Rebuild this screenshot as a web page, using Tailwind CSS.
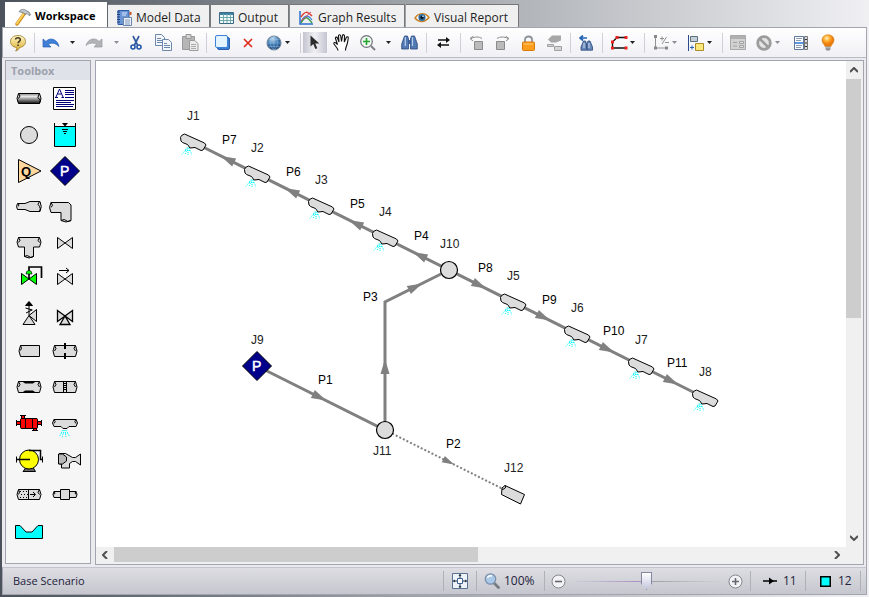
<!DOCTYPE html>
<html lang="en">
<head>
    <meta charset="UTF-8">
    <meta name="viewport" content="width=device-width, initial-scale=1.0">
    <title>Workspace - Base Scenario</title>
    <script src="https://cdn.jsdelivr.net/npm/@tailwindcss/browser@4"></script>
</head>
<body class="h-screen overflow-hidden flex flex-col pl-0.5 pr-0.5 pb-0.5 bg-linear-to-r from-[#4b525b] via-[#9ba0a5] via-45% to-[#f0f0f3] font-['Open_Sans',sans-serif] text-xs text-[#1e1e1e]">

    <!-- Tabs -->
    <nav class="flex items-end h-[27px] shrink-0 pl-[3px] gap-px" role="tablist">
        <button role="tab" aria-selected="true" class="flex items-center gap-1 h-[25px] w-[102px] pl-2.5 pt-1 bg-white font-bold text-[11px] text-black whitespace-nowrap">
            <svg width="16" height="18" viewBox="0 0 16 18" class="shrink-0"><path d="M2 16 9 6" stroke="#c98a1c" stroke-width="3.400" stroke-linecap="round"/><path d="M2 15.500 8.500 6" stroke="#ffd257" stroke-width="2" stroke-linecap="round"/><path d="M4 3.500C6 1 9 .8 11 2.500l3 1.500 1.500 3-1.500.5-2-2-2 .8L8 4.500 5 4z" fill="#c3c8cd" stroke="#5d6268" stroke-width=".7"/></svg>
            Workspace
        </button>
        <button role="tab" class="flex items-center gap-1 h-[23px] w-[102px] pl-2 pt-1 bg-[#f0f0f0] border-t border-r border-[#77777a] whitespace-nowrap">
            <svg width="16" height="16" viewBox="0 0 16 16" class="shrink-0"><path d="M2 .5h11v14H2z" fill="#6a96d8" stroke="#2f5da8"/><path d="M1 2h3M1 4.500h3M1 7h3M1 9.500h3M1 12h3" stroke="#1f3f7a"/><path d="M6 3h5M6 5h4" stroke="#dbe8fa"/><path d="M7.500 7.500h8v8h-8z" fill="#eef3fb" stroke="#6883ad"/><path d="M9 10h5M9 12h5M9 14h5" stroke="#7f97bd"/><path d="M14.500 2v3" stroke="#c9552d" stroke-width="2"/></svg>
            Model Data
        </button>
        <button role="tab" class="flex items-center gap-1 h-[23px] w-[78px] pl-2 pt-1 bg-[#f0f0f0] border-t border-r border-[#77777a] whitespace-nowrap">
            <svg width="15" height="14" viewBox="0 0 15 14" class="shrink-0"><path d="M.5 1.500h14v11H.5z" fill="#f4fafb" stroke="#3a6b82"/><path d="M1 3h13" stroke="#3d82a5" stroke-width="2"/><path d="M1 6.500h13M1 9.500h13M4.500 3v9M8 3v9M11.500 3v9" stroke="#6fa9ab"/></svg>
            Output
        </button>
        <button role="tab" class="flex items-center gap-1 h-[23px] w-[115px] pl-2 pt-1 bg-[#f0f0f0] border-t border-r border-[#77777a] whitespace-nowrap">
            <svg width="16" height="16" viewBox="0 0 16 16" class="shrink-0" fill="none"><path d="M2 1v13h13" stroke="#2a6fd0" stroke-width="1.500"/><path d="M3 7c4-6 6-6 11-1" stroke="#e0412f" stroke-width="1.500"/><path d="M3 12c3-7 7-8 11-2" stroke="#3b7fe0" stroke-width="1.300"/><path d="M3 13C7 6 9 6 14 13" stroke="#3c9c4d" stroke-width="1.500"/><path d="M13 2 3 11" stroke="#d4476b"/></svg>
            Graph Results
        </button>
        <button role="tab" class="flex items-center gap-1 h-[23px] w-[113px] pl-2 pt-1 bg-[#f0f0f0] border-t border-r border-[#77777a] whitespace-nowrap">
            <svg width="16" height="14" viewBox="0 0 16 14" class="shrink-0"><path d="M1 7c3.500-5 10-6 14-.5C11 11.500 5 12 1 7z" fill="#fff" stroke="#c98428" stroke-width="1.500"/><circle cx="8" cy="6.500" r="3.600" fill="#2e6a9c"/><circle cx="8" cy="6.500" r="1.700" fill="#0c1c2c"/><circle cx="9" cy="5.300" r=".8" fill="#fff"/></svg>
            Visual Report
        </button>
    </nav>

    <!-- Toolbar -->
    <div role="toolbar" class="flex items-stretch h-[31px] shrink-0 border border-[#a2a4b0] border-b-[#b9bac6] pl-0.5 bg-linear-to-b from-white to-[#f0f0f5]">
        <button aria-label="Help" class="w-[26px] grid place-items-center shrink-0">
            <svg width="18" height="18" viewBox="0 0 18 18"><defs><linearGradient id="gold" x2="0" y2="1"><stop stop-color="#fff8c8"/><stop offset="1" stop-color="#d9ab28"/></linearGradient></defs><path d="M9 1.500c4.500 0 7.500 2.500 7.500 6s-2.500 5.500-6 6c-.5 2-2 3-4 3.500 1-1 1.300-2 1-3.500-3.500-.5-6-2.500-6-6s3-6 7.500-6z" fill="url(#gold)" stroke="#9a7a2c" stroke-width=".8"/><path d="M6.500 5.500C6.800 3 11.500 3 11.300 6c0 1.500-2.200 1.500-2.200 3.200M9.100 10.600v1.500" fill="none" stroke="#4a3a20" stroke-width="1.600"/></svg>
        </button>
        <span class="w-1.5 grid place-items-center shrink-0"><i class="w-px h-5 bg-[#cfcfd8]"></i></span>
        <button aria-label="Undo" class="w-7 grid place-items-center shrink-0">
            <svg width="18" height="14" viewBox="0 0 18 14"><path d="M1 3v8h8L6.500 8.500C9 6.500 13 6.500 17 10.500 15.500 3.500 8.500.5 4 5.500z" fill="#3f7fd8" stroke="#2c62b4" stroke-width=".7"/></svg>
        </button>
        <button aria-label="Undo list" class="w-3.5 grid place-items-center shrink-0"><svg width="5" height="3"><path d="M0 0h5L2.500 3z" fill="#222"/></svg></button>
        <button aria-label="Redo" class="w-[30px] grid place-items-center shrink-0">
            <svg width="18" height="14" viewBox="0 0 18 14"><path d="M17 3v8H9l2.500-2.500C9 6.500 5 6.500 1 9.500 2.500 3.500 9.500.5 14 5.500z" fill="#b2b3b6" stroke="#97989c" stroke-width=".7"/></svg>
        </button>
        <button aria-label="Redo list" class="w-3.5 grid place-items-center shrink-0"><svg width="5" height="3"><path d="M0 0h5L2.500 3z" fill="#8e8e96"/></svg></button>
        <button aria-label="Cut" class="w-[26px] grid place-items-center shrink-0">
            <svg width="12" height="16" viewBox="0 0 12 16" fill="none"><path d="m3 1 4.500 9M9 1 4.500 10" stroke="#345da0" stroke-width="1.700"/><circle cx="3" cy="12" r="2" stroke="#2356a8" stroke-width="1.600"/><circle cx="9" cy="12" r="2" stroke="#2356a8" stroke-width="1.600"/></svg>
        </button>
        <button aria-label="Copy" class="w-7 grid place-items-center shrink-0">
            <svg width="17" height="17" viewBox="0 0 17 17" fill="#f3f6fb" stroke="#6e87ad"><path d="M.5.500h6l3 3v8h-9z"/><path d="M2 4.500h4M2 6.500h5M2 8.500h5"/><path d="M7.500 5.500h6l3 3v8h-9z"/><path d="M9 9.500h3M9 11.500h6M9 13.500h6"/></svg>
        </button>
        <button aria-label="Paste" class="w-[26px] grid place-items-center shrink-0">
            <svg width="17" height="17" viewBox="0 0 17 17"><path d="M.5 2.500h12v13H.5z" fill="#b6b6b6" stroke="#999"/><path d="M4 .5h5v4H4z" fill="#d5d5d5" stroke="#999"/><path d="M7.500 6.500h5l3.500 3v7H7.500z" fill="#ececec" stroke="#9a9a9a"/><path d="M9 10.500h5M9 12.500h5M9 14.500h5" stroke="#aaa"/></svg>
        </button>
        <span class="w-1.5 grid place-items-center shrink-0"><i class="w-px h-5 bg-[#cfcfd8]"></i></span>
        <button aria-label="Duplicate" class="w-[26px] grid place-items-center shrink-0">
            <svg width="15" height="15" viewBox="0 0 15 15"><rect x="2.500" y="2.500" width="12" height="12" rx="1.500" fill="#3d7fd2" stroke="#2a5fae"/><rect x=".5" y=".5" width="12" height="12" rx="1.500" fill="#e4f4ff" stroke="#3b82d8"/></svg>
        </button>
        <button aria-label="Delete" class="w-[26px] grid place-items-center shrink-0">
            <svg width="10" height="10" viewBox="0 0 10 10"><path d="m1 1 8 8M9 1 1 9" stroke="#e02a1a" stroke-width="1.700"/></svg>
        </button>
        <button aria-label="Globe" class="w-9 flex items-center gap-[3px] pl-[5px] shrink-0">
            <svg width="16" height="16" viewBox="0 0 16 16"><defs><radialGradient id="globe" cx=".4" cy=".2" r=".8"><stop stop-color="#c4dcee"/><stop offset=".5" stop-color="#427db5"/><stop offset="1" stop-color="#1d4478"/></radialGradient></defs><circle cx="8" cy="8" r="7" fill="url(#globe)" stroke="#6c8197"/><path d="M1.500 8h13M3 4.500h10M3 11.500h10M8 1v14M8 1C3 5 3 11 8 15M8 1c5 4 5 10 0 14" fill="none" stroke="#a5cbe8" stroke-width=".4"/></svg>
            <svg width="5" height="3"><path d="M0 0h5L2.500 3z" fill="#222"/></svg>
        </button>
        <span class="w-1.5 grid place-items-center shrink-0"><i class="w-px h-5 bg-[#cfcfd8]"></i></span>
        <button aria-label="Select" aria-pressed="true" class="w-6 my-1 grid place-items-center shrink-0 bg-linear-to-r from-[#c4c5d0] via-[#efeff4] to-[#c4c5d0]">
            <svg width="10" height="15" viewBox="0 0 10 15"><path d="M.5.5v11l2.800-2.500 2 5 2-.8-2-4.700h4z" fill="#2b2b2b"/></svg>
        </button>
        <button aria-label="Pan" class="w-7 grid place-items-center shrink-0">
            <svg width="17" height="17" viewBox="0 0 17 17"><path d="M5 16.500c0-2-2.500-4-4-6.500-.5-1.500 1-2 2-1l1.500 1.500L2.500 4.500c-.3-1.500 1.500-2 2-.5L6 8 5.500 2c0-1.600 2-1.600 2.200 0L8.500 7.500 9.500 1.700c.3-1.500 2-1.300 2 .3L11.300 8l2-4.500c.6-1.300 2.200-.7 2 .7-.6 3-.6 5-1.800 7.800-.5 1.500-1 2-1 4.500" fill="#fff" stroke="#111" stroke-width="1.100"/></svg>
        </button>
        <button aria-label="Zoom" class="w-[26px] grid place-items-center shrink-0">
            <svg width="16" height="16" viewBox="0 0 16 16"><path d="m11 11 4 4" stroke="#7b8088" stroke-width="2"/><circle cx="6.500" cy="6.500" r="5.800" fill="#f2f8f2" stroke="#70767c" stroke-width="1.200"/><path d="M3 6.500h7M6.500 3v7" stroke="#24a52c" stroke-width="1.600"/></svg>
        </button>
        <button aria-label="Zoom list" class="w-3.5 grid place-items-center shrink-0"><svg width="5" height="3"><path d="M0 0h5L2.500 3z" fill="#222"/></svg></button>
        <button aria-label="Find" class="w-7 grid place-items-center shrink-0">
            <svg width="17" height="15" viewBox="0 0 17 15"><path d="M3.500 1h3l1 3v10H.7V9zM13.500 1h-3l-1 3v10h6.800V9z" fill="#5179b4" stroke="#28477c" stroke-width=".8"/><path d="M7 5h3v4H7z" fill="#3c5f99"/><path d="M4.300 2v9M11.500 2v9" stroke="#b8cdea" stroke-width="1.200"/></svg>
        </button>
        <span class="w-1.5 grid place-items-center shrink-0"><i class="w-px h-5 bg-[#cfcfd8]"></i></span>
        <button aria-label="Reverse direction" class="w-7 grid place-items-center shrink-0">
            <svg width="13" height="11" viewBox="0 0 13 11"><path d="M1 3h10M2 8h10" stroke="#111" stroke-width="1.300"/><path d="M9 0v6l4-3zM4 5v6L0 8z" fill="#111"/></svg>
        </button>
        <span class="w-1.5 grid place-items-center shrink-0"><i class="w-px h-5 bg-[#cfcfd8]"></i></span>
        <button aria-label="Rotate left" class="w-[26px] grid place-items-center shrink-0">
            <svg width="15" height="14" viewBox="0 0 15 14"><path d="M5.500 5.500h8v8h-8z" fill="#bbb" stroke="#8b8b8b"/><path d="M13 2.500C10 .5 6 .5 2 2.500M4.500 0 1 2.500 4 5" fill="none" stroke="#8b8b8b"/></svg>
        </button>
        <button aria-label="Rotate right" class="w-[26px] grid place-items-center shrink-0">
            <svg width="15" height="14" viewBox="0 0 15 14"><path d="M1.500 5.500h8v8h-8z" fill="#bbb" stroke="#8b8b8b"/><path d="M2 2.500C5 .5 9 .5 13 2.500M10.500 0 14 2.500 11 5" fill="none" stroke="#8b8b8b"/></svg>
        </button>
        <button aria-label="Lock" class="w-[26px] grid place-items-center shrink-0">
            <svg width="13" height="16" viewBox="0 0 13 16"><path d="M3 7.500V4.500C3 .5 10 .5 10 4.500v3" fill="none" stroke="#8d9199" stroke-width="1.800"/><rect x=".5" y="7" width="12" height="8.500" rx="1" fill="#ff9d1c" stroke="#d87806"/><path d="M1.500 9h10" stroke="#ffd07d"/></svg>
        </button>
        <button aria-label="Arrange" class="w-[26px] grid place-items-center shrink-0">
            <svg width="16" height="16" viewBox="0 0 16 16"><path d="M2 4.500 6 .5h9v5l-5 2H5z" fill="#a6a6a6"/><path d="M1.500 9.500h6v2h-6zM8.500 11.500h7v4h-7z" fill="#d4d4d4" stroke="#a0a0a0"/></svg>
        </button>
        <span class="w-1.5 grid place-items-center shrink-0"><i class="w-px h-5 bg-[#cfcfd8]"></i></span>
        <button aria-label="Find previous" class="w-[26px] grid place-items-center shrink-0">
            <svg width="14" height="16" viewBox="0 0 14 16"><path d="M8 3H2M4 .500 1 3l3 2.500" fill="none" stroke="#2463b8" stroke-width="1.700"/><path d="M4.500 6h2l1 2.500v6.700H2V12zM11 6H9L8 8.500v6.700h5.500V12z" fill="#6788b8" stroke="#28477c" stroke-width=".8"/><path d="M5 8v5M10 8v5" stroke="#d0def2"/></svg>
        </button>
        <span class="w-1.5 grid place-items-center shrink-0"><i class="w-px h-5 bg-[#cfcfd8]"></i></span>
        <button aria-label="Pipe segments" class="w-9 flex items-center gap-0.5 pl-1.5 shrink-0">
            <svg width="17" height="14" viewBox="0 0 17 14"><path d="M15 1.500H6L1.500 6v6H15" fill="none" stroke="#111" stroke-width="1.300"/><path d="M4.500 0h3v3h-3zM13.500 0h3v3h-3zM0 4.500h3v3H0zM0 10.500h3v3H0zM13.500 10.500h3v3h-3z" fill="#e8221c"/></svg>
            <svg width="5" height="3"><path d="M0 0h5L2.500 3z" fill="#222"/></svg>
        </button>
        <span class="w-1.5 grid place-items-center shrink-0"><i class="w-px h-5 bg-[#cfcfd8]"></i></span>
        <button aria-label="Scale" class="w-9 flex items-center gap-[3px] pl-1.5 shrink-0">
            <svg width="16" height="15" viewBox="0 0 16 15"><path d="M2.500 2v11H14M7 3.500h4M9 1.500v4M9 9l4.500-7M12 7.500h4" fill="none" stroke="#929292"/><path d="M1 0h3v3H1zM1 11.500h3v3H1zM12 11.500h3v3h-3z" fill="#888"/></svg>
            <svg width="5" height="3"><path d="M0 0h5L2.500 3z" fill="#8e8e96"/></svg>
        </button>
        <button aria-label="Align" class="w-9 flex items-center gap-[3px] pl-[5px] shrink-0">
            <svg width="16" height="16" viewBox="0 0 16 16"><path d="M.5 0v16" stroke="#2b4a8a"/><path d="M2.500 1.500h7v5h-7z" fill="#c3d0d8" stroke="#5e6f7c"/><path d="M7.500 8.500h8v7h-8z" fill="#fbe77a" stroke="#a88d2a"/><path d="M2 12.500h4M4 10.500v4" stroke="#2463b8"/></svg>
            <svg width="5" height="3"><path d="M0 0h5L2.500 3z" fill="#222"/></svg>
        </button>
        <span class="w-1.5 grid place-items-center shrink-0"><i class="w-px h-5 bg-[#cfcfd8]"></i></span>
        <button aria-label="Properties" class="w-[26px] grid place-items-center shrink-0">
            <svg width="16" height="15" viewBox="0 0 16 15"><path d="M.5.500h15v14H.5z" fill="#d2d2d2" stroke="#a8a8a8"/><path d="M1 2.500h14" stroke="#b0b0b0" stroke-width="3"/><path d="M3 7.500h4M3 11h4M9.500 6.500h4v2h-4zM9.500 10.500h4v2h-4z" fill="#e6e6e6" stroke="#a0a0a0"/></svg>
        </button>
        <button aria-label="Disable" class="w-9 flex items-center gap-[3px] pl-[5px] shrink-0">
            <svg width="16" height="16" viewBox="0 0 16 16"><circle cx="8" cy="8" r="6.300" fill="#e4e4e4" stroke="#9c9c9c" stroke-width="2.800"/><path d="m3.500 3.500 9 9" stroke="#9c9c9c" stroke-width="2.600"/></svg>
            <svg width="5" height="3"><path d="M0 0h5L2.500 3z" fill="#8e8e96"/></svg>
        </button>
        <button aria-label="List" class="w-7 grid place-items-center shrink-0">
            <svg width="14" height="14" viewBox="0 0 14 14"><path d="M.5.500h9v13h-9z" fill="#fff" stroke="#5d7699"/><path d="M10.500.500h3v13h-3z" fill="#ddd" stroke="#777"/><path d="M2 2.500h6M2 4.500h5M2 9.500h6M2 11.500h5" stroke="#8b99ad"/><path d="M1 7h8" stroke="#5c96e0" stroke-width="2"/><path d="M11 3.500h2M11 7h2M11 10.500h2" stroke="#333"/></svg>
        </button>
        <button aria-label="Tips" class="w-[26px] grid place-items-center shrink-0">
            <svg width="14" height="17" viewBox="0 0 14 17"><defs><radialGradient id="bulb" cx=".4" cy=".3"><stop stop-color="#fff2c0"/><stop offset=".5" stop-color="#ffb030"/><stop offset="1" stop-color="#ec7c0c"/></radialGradient></defs><path d="M7 .8c4 0 6 2.500 6 5.400 0 3-2.500 4-3 6.300H4c-.5-2.300-3-3.300-3-6.300C1 3.300 3 .8 7 .8z" fill="url(#bulb)" stroke="#d88420" stroke-width=".6"/><path d="M4.500 12.500h5v2.500l-1 1.500h-3l-1-1.500z" fill="#8b8e94"/><path d="M4.500 13.800h5" stroke="#ddd" stroke-width=".7"/></svg>
        </button>
    </div>

    <!-- Work area -->
    <div class="flex flex-1 min-h-0 gap-1 pt-0.5 pb-0.5 pl-[3px] pr-0.5 bg-[#ebebef] border-r border-[#a2a4b0]">

        <!-- Toolbox -->
        <aside class="w-[86px] shrink-0 flex flex-col border border-[#a2a4b0] bg-[#f6f6f6] mb-px">
            <h2 class="h-[19px] shrink-0 pl-[5px] leading-5 text-[11px] font-bold text-[#9ca1ac] bg-[#dfe2e8]">Toolbox</h2>
            <div class="grid grid-cols-[36px_36px] auto-rows-[36px] pl-[5px]">
                <button aria-label="Pipe"><svg width="36" height="36" fill="#dcdcdc" stroke="#000"><defs><linearGradient id="pipe" x2="0" y2="1"><stop stop-color="#888"/><stop offset=".3" stop-color="#e8e8e8"/><stop offset="1" stop-color="#111"/></linearGradient></defs><path d="M7.500 13.500h21q3 5 0 10h-21q-3-5 0-10z" fill="url(#pipe)"/><path d="M28.500 13.500q-3 5 0 5.500 1.500.5 0 4.500M7.500 13.500q3 2.500 0 5" fill="none"/></svg></button>
                <button aria-label="Annotation"><svg width="36" height="36"><path d="M6.500 7.500h22v22h-22z" fill="#fff" stroke="#000"/><path d="m9 17 3.500-8L16 17M10.500 14h4M8 17.500h3M14.500 17.500H17M18 10.500h9M18 12.500h9M18 14.500h9M18 17.500h9M9 20.500h18M9 22.500h15M9 24.500h18M9 26.500h17" fill="none" stroke="#00007a"/></svg></button>
                <button aria-label="Branch"><svg width="36" height="36"><circle cx="18" cy="19" r="8.500" fill="#dcdcdc" stroke="#000"/></svg></button>
                <button aria-label="Reservoir"><svg width="36" height="36"><path d="M7.500 10.500h21v20h-21z" fill="#0ff"/><path d="M7.500 7v23.500h21V7M7.500 10.500h21M15 13.500h6M16 15.500h4M17 17.500h2" fill="none" stroke="#000"/><path d="M15 7h6l-3 3.500z"/></svg></button>
                <button aria-label="Assigned flow"><svg width="36" height="36" class="font-['Liberation_Sans',sans-serif] text-[13px] font-bold"><path d="M7.500 7.500v23l22.500-11.500z" fill="#ffd8a0" stroke="#000"/><text x="10" y="24" fill="#000">Q</text></svg></button>
                <button aria-label="Assigned pressure"><svg width="36" height="36" class="font-['Liberation_Sans',sans-serif] text-sm"><path d="m18 4.500 14.500 14.500L18 33.500 3.500 19z" fill="#00008b" stroke="#000"/><text x="13" y="24" fill="#fff" stroke="#fff" stroke-width=".5">P</text></svg></button>
                <button aria-label="Area change"><svg width="36" height="36" fill="#dcdcdc" stroke="#000"><path d="M6.500 15.500h7.500l5-2h10q2.500 5 0 10H19l-5-2H6.500q-2-3 0-6z"/><path d="M28.500 13.500q-3 3 0 5 1.500 2 0 5M7 15.500q2 1.500 0 3" fill="none"/></svg></button>
                <button aria-label="Bend"><svg width="36" height="36" fill="#dcdcdc" stroke="#000"><path d="M4 14.500h17.500l2.500 2.500v15.500q-5 3-10 0V24.500H4q-3-5 0-10z"/><path d="M4 14.500q3 3 0 5M14 32.500q4-2 5 0t5 0" fill="none"/></svg></button>
                <button aria-label="Tee"><svg width="36" height="36" fill="#dcdcdc" stroke="#000"><path d="M7.500 13.500h21q3 4.500 0 9.500h-6v9.500q-4.500 3-9 0V23h-6q-3-5 0-9.500z"/><path d="M7.500 13.500q3 3 0 5M28.500 13.500q-3 3 0 5M13.500 32.500q3-2 4.500 0t4.500 0" fill="none"/></svg></button>
                <button aria-label="Valve"><svg width="36" height="36" fill="#dcdcdc" stroke="#000"><path d="M10.500 13.500v11l15-11v11z"/></svg></button>
                <button aria-label="Control valve"><svg width="36" height="36"><path d="M10.500 13.500v11l15-11v11z" fill="#0f0" stroke="#000"/><path d="M18 19V7h12.500v11" fill="none" stroke="#000" stroke-width="1.700"/><path d="M15 14q0-3.500 3-3.500t3 3.500z" fill="#0f0" stroke="#000" stroke-width=".6"/></svg></button>
                <button aria-label="Check valve"><svg width="36" height="36" fill="#dcdcdc" stroke="#000"><path d="M10.500 13.500v11l15-11v11z"/><path d="M12 10.500h10M19 8l3 2.500-3 2.500" fill="none"/></svg></button>
                <button aria-label="Relief valve"><svg width="36" height="36" fill="#dcdcdc" stroke="#000"><path d="m18 19.500 7.500-6v12zM18 19.500l-6 9h12z"/><path d="M18 19.500V6M14.500 12l7 2M21 14l-6 3" fill="none"/><path d="m18 5.500-3.500 4h7z" fill="#000"/></svg></button>
                <button aria-label="Three-way valve"><svg width="36" height="36" fill="#dcdcdc" stroke="#000"><path d="M10.500 14.500v11l15-11v11zM18 20l-5 8.500h10z" stroke-width="1.300"/></svg></button>
                <button aria-label="Dead end"><svg width="36" height="36" fill="#dcdcdc" stroke="#000"><path d="M9.500 13.500h19v11h-19q-3-5.500 0-11z"/><path d="M9.500 13.500q2 3 0 5" fill="none"/></svg></button>
                <button aria-label="Orifice"><svg width="36" height="36" fill="#dcdcdc" stroke="#000"><path d="M7.500 13.500h21q3 5.500 0 11h-21q-3-5.500 0-11z"/><path d="M7.500 13.500q3 3 0 5.500M28.500 13.500q-3 3 0 5.500" fill="none"/><path d="M18 11v6M18 21v6" stroke-width="2"/></svg></button>
                <button aria-label="Venturi"><svg width="36" height="36" fill="#dcdcdc" stroke="#000"><path d="M7.500 13.500h21q3 5.500 0 11h-21q-3-5.500 0-11z"/><path d="M7.500 13.500q3 3 0 5.500M28.500 13.500q-3 3 0 5.500" fill="none"/><path d="M12 13.500h12l-2 1.500h-8zM12 24.500h12l-2-1.500h-8z" fill="#000"/></svg></button>
                <button aria-label="Screen"><svg width="36" height="36" fill="#dcdcdc" stroke="#000"><path d="M7.500 13.500h21q3 5.500 0 11h-21q-3-5.500 0-11z"/><path d="M7.500 13.500q3 3 0 5.500M28.500 13.500q-3 3 0 5.500M16.500 13.500v11M19.500 13.500v11M17 15.500h3M17 17.500h3M17 19.500h3M17 21.500h3" fill="none"/></svg></button>
                <button aria-label="Heat exchanger"><svg width="36" height="36" fill="#f00" stroke="#000"><path d="M5.500 17.500h4v3h-4zM26.500 17.500h4v3h-4z"/><path d="M10.500 11.500h3v4h-3zM22.500 23.500h3v3h-3z"/><path d="M9.500 15.500q0-1 1.500-1h14q1.500 0 1.500 1v8q0 1-1.500 1H11q-1.500 0-1.500-1z"/><path d="M14.500 14.500v10M21.500 14.500v10M5.500 16v6M30.500 16v6M9 11.500h6M21 26.500h6" fill="none"/></svg></button>
                <button aria-label="Spray discharge"><svg width="36" height="36" fill="#dcdcdc" stroke="#000"><path d="M7 15.500h22q3 3.500 0 7h-7l-2 2h-4l-2-2H7q-3-3.500 0-7z"/><path d="M7 15.500q2.500 2 0 4M29 15.500q-2.500 2 0 4" fill="none"/><path d="m16 26-4 7M17 26l-2 8M18 26l1 8M19 26l4 7M14 29h7" stroke="#0ff" stroke-dasharray="1 1" fill="none"/></svg></button>
                <button aria-label="Pump"><svg width="36" height="36"><path d="m12 31.500 3-4h7l2.500 4z" fill="#666" stroke="#000"/><circle cx="18" cy="19.500" r="9.500" fill="#ff0" stroke="#000"/><path d="M6 19.500h13M18 10.500h11.500v9h2" fill="none" stroke="#000" stroke-width="1.500"/><path d="M5.500 16.500v6M31.500 16.500v6" stroke="#000"/></svg></button>
                <button aria-label="Jet pump"><svg width="36" height="36" fill="#dcdcdc" stroke="#000"><path d="M12.500 13.500h6l7 4h3l5-3.500v11l-5-3.500h-3l-3 2v4.500h-8V24h-2z"/><path d="M11.500 14v10h4l4-3v-4l-4-3z" fill="#b8b8b8"/></svg></button>
                <button aria-label="Volume balance"><svg width="36" height="36" fill="#dcdcdc" stroke="#000"><path d="M7.500 13.500h21q3 5 0 10h-21q-3-5 0-10z"/><path d="M17.500 13.500v10M19 18.500h5M22 16l2.500 2.500L22 21M28.500 13.500q-3 3 0 5M7.500 13.500q2 3 0 5" fill="none"/><path d="M9 15.500h8M10 18.500h7M9 21.500h8" stroke-dasharray="1 2"/></svg></button>
                <button aria-label="General component"><svg width="36" height="36" fill="#dcdcdc" stroke="#000"><path d="M7 15.500h22q2 3 0 6H7q-2-3 0-6z"/><path d="M7 15.500q2 1.500 0 3M29 15.500q-2 1.500 0 3" fill="none"/><path d="M13.500 13.500h9v10h-9z"/></svg></button>
                <button aria-label="Weir"><svg width="36" height="36"><path d="M4.500 13.500H9l6 6.500h6l6-6.500h4.500v13h-27z" fill="#0ff" stroke="#000"/></svg></button>
            </div>
        </aside>

        <!-- Canvas with its scroll bars -->
        <main class="flex-1 min-w-0 grid grid-cols-[1fr_17px] grid-rows-[1fr_17px] border border-[#a2a4b0] bg-[#f0f0f0]">
            <div class="overflow-hidden bg-white min-w-0 min-h-0">
                <svg width="750" height="486" viewBox="96 61 750 486" class="font-['Liberation_Sans',sans-serif] text-xs max-w-none">
                    <defs>
                        <path id="arrow" d="M7 0-8-4.500v9z" fill="#808080"/>
                        <g id="spray">
                            <path d="m-12.500-4.500 1-2 3-1.500 20 9 1.500 2-3 5-2 .5-6-3-5 .5-2.500-3.500-5-2-1.500-1.500z" fill="#dcdcdc" stroke="#000"/>
                            <path d="m-6 5.500-5 7M-5 5.500l-3 7M-5 6v7M-4 6l3 7M-8 8.500h6" fill="none" stroke="#0ff" stroke-dasharray="1 1"/>
                        </g>
                    </defs>

                    <!-- Pipes -->
                    <g fill="none" stroke="#808080" stroke-width="3">
                        <path d="M193 142 705 398"/>
                        <path d="M257 366 385 430V302L449 270"/>
                        <path d="M385 430 513 494" stroke-width="2" stroke-dasharray="2 2"/>
                    </g>
                    <use href="#arrow" transform="translate(227 159) rotate(206.500)"/>
                    <use href="#arrow" transform="translate(291 191) rotate(206.500)"/>
                    <use href="#arrow" transform="translate(355 223) rotate(206.500)"/>
                    <use href="#arrow" transform="translate(419 255) rotate(206.500)"/>
                    <use href="#arrow" transform="translate(480 285.500) rotate(26.500)"/>
                    <use href="#arrow" transform="translate(544 317.500) rotate(26.500)"/>
                    <use href="#arrow" transform="translate(608 349.500) rotate(26.500)"/>
                    <use href="#arrow" transform="translate(672 381.500) rotate(26.500)"/>
                    <use href="#arrow" transform="translate(320 397.500) rotate(26.500)"/>
                    <use href="#arrow" transform="translate(416 286.500) rotate(-26.500)"/>
                    <use href="#arrow" transform="translate(385 366) rotate(-90)"/>
                    <use href="#arrow" transform="translate(449 462) rotate(26.500) scale(.8)"/>

                    <!-- Junctions -->
                    <use href="#spray" x="193" y="142"/>
                    <use href="#spray" x="257" y="174"/>
                    <use href="#spray" x="321" y="206"/>
                    <use href="#spray" x="385" y="238"/>
                    <use href="#spray" x="513" y="302"/>
                    <use href="#spray" x="577" y="334"/>
                    <use href="#spray" x="641" y="366"/>
                    <use href="#spray" x="705" y="398"/>
                    <circle cx="449" cy="270" r="8.500" fill="#dcdcdc" stroke="#000" stroke-width="1.200"/>
                    <circle cx="385" cy="430" r="8.500" fill="#dcdcdc" stroke="#000" stroke-width="1.200"/>
                    <path d="m257 351.500 14.500 14.500L257 380.500 242.500 366z" fill="#00008b" stroke="#000"/>
                    <text x="252" y="371" fill="#fff" stroke="#fff" stroke-width=".5" class="text-sm">P</text>
                    <path d="m502 488 3-2.500 19.500 9-4 9.500-19-9.500z" fill="#dcdcdc" stroke="#000"/>
                    <path d="M505 485.500q2 3-3 4" fill="none" stroke="#000"/>

                    <g fill="#222">
                        <text x="187" y="120">J1</text>
                        <text x="251" y="152">J2</text>
                        <text x="315" y="184">J3</text>
                        <text x="379" y="216">J4</text>
                        <text x="440" y="248">J10</text>
                        <text x="507" y="280">J5</text>
                        <text x="571" y="312">J6</text>
                        <text x="635" y="344">J7</text>
                        <text x="699" y="376">J8</text>
                        <text x="251" y="344">J9</text>
                        <text x="373" y="455">J11</text>
                        <text x="504" y="472">J12</text>
                    </g>
                    <g fill="#000">
                        <text x="222" y="144">P7</text>
                        <text x="286" y="176">P6</text>
                        <text x="350" y="208">P5</text>
                        <text x="414" y="240">P4</text>
                        <text x="478" y="272">P8</text>
                        <text x="542" y="304">P9</text>
                        <text x="603" y="335">P10</text>
                        <text x="667" y="367">P11</text>
                        <text x="363" y="301">P3</text>
                        <text x="318" y="384">P1</text>
                        <text x="446" y="448">P2</text>
                    </g>
                </svg>
            </div>
            <div class="flex flex-col items-start min-h-0">
                <button aria-label="Scroll up" class="w-4 h-[18px] grid place-items-center shrink-0"><svg width="8" height="6"><path d="m0 5 4-4 4 4" fill="none" stroke="#505050" stroke-width="2"/></svg></button>
                <div class="w-4 flex-1"><div class="w-[15px] h-[53%] bg-[#cdcdcd]"></div></div>
                <button aria-label="Scroll down" class="w-4 h-[18px] grid place-items-center shrink-0"><svg width="8" height="6"><path d="m0 1 4 4 4-4" fill="none" stroke="#505050" stroke-width="2"/></svg></button>
            </div>
            <div class="flex items-start">
                <button aria-label="Scroll left" class="w-[18px] h-4 grid place-items-center shrink-0"><svg width="6" height="8"><path d="M5 0 1 4l4 4" fill="none" stroke="#505050" stroke-width="2"/></svg></button>
                <div class="flex-1 h-[15px]"><div class="w-[51%] h-[15px] bg-[#cdcdcd]"></div></div>
                <button aria-label="Scroll right" class="w-[18px] h-4 grid place-items-center shrink-0"><svg width="6" height="8"><path d="m1 0 4 4-4 4" fill="none" stroke="#505050" stroke-width="2"/></svg></button>
            </div>
        </main>
    </div>

    <!-- Status bar -->
    <footer class="flex items-center h-7 shrink-0 border border-[#a2a4b0] border-t-[#c3c4cf] pl-2.5 pr-[5px] bg-linear-to-b from-[#dddde3] to-[#c6c6ce] text-[#23233a]">
        <span class="flex-1 text-[11px]">Base Scenario</span>
        <i class="w-px h-5 bg-[#b0b0ba]"></i>
        <button aria-label="Fit to window" class="w-8 grid place-items-center">
            <svg width="16" height="16" viewBox="0 0 16 16"><path d="M.5.500h15v15H.5z" fill="#eef3fa" stroke="#5b6f90"/><path d="M5.500 5.500h5v5h-5z" fill="#fff" stroke="#41608f"/><path d="M8 1v4M8 11v4M1 8h4M11 8h4" stroke="#234"/><path d="M6.500 3h3L8 1zM6.500 13h3L8 15zM3 6.500v3L1 8zM13 6.500v3L15 8z" fill="#234"/></svg>
        </button>
        <i class="w-px h-5 bg-[#b0b0ba]"></i>
        <button class="flex items-center gap-1 w-[67px] pl-[7px]">
            <svg width="16" height="16" viewBox="0 0 16 16"><path d="m10 10 4.500 4.500" stroke="#777b82" stroke-width="2.800" stroke-linecap="round"/><circle cx="6.500" cy="6" r="5.200" fill="#aac8e8" stroke="#7c90ac" stroke-width="1.300"/><path d="M3.500 5C4 3 6 2.500 8 3" stroke="#fff" stroke-width="1.300" fill="none"/></svg>
            100%
        </button>
        <i class="w-px h-5 bg-[#b0b0ba]"></i>
        <button aria-label="Zoom out" class="w-[26px] grid place-items-center">
            <svg width="15" height="15"><circle cx="7.500" cy="7.500" r="6.500" fill="#f3f3f6" stroke="#85868f"/><path d="M4 7.500h7" stroke="#666770" stroke-width="1.600"/></svg>
        </button>
        <input type="range" min="0" max="200" value="100" aria-label="Zoom level" class="w-[151px] h-5 appearance-none bg-transparent [&::-webkit-slider-runnable-track]:h-[18px] [&::-webkit-slider-runnable-track]:bg-[linear-gradient(90deg,transparent,#a98fc4_45%,#a2a2ac_55%,transparent)] [&::-webkit-slider-runnable-track]:bg-[length:100%_1px] [&::-webkit-slider-runnable-track]:bg-center [&::-webkit-slider-runnable-track]:bg-no-repeat [&::-webkit-slider-thumb]:appearance-none [&::-webkit-slider-thumb]:w-[11px] [&::-webkit-slider-thumb]:h-[18px] [&::-webkit-slider-thumb]:border [&::-webkit-slider-thumb]:border-[#8587a0] [&::-webkit-slider-thumb]:bg-linear-to-b [&::-webkit-slider-thumb]:from-white [&::-webkit-slider-thumb]:to-[#c3c6de] [&::-webkit-slider-thumb]:[clip-path:polygon(0_0,100%_0,100%_65%,50%_100%,0_65%)]">
        <button aria-label="Zoom in" class="w-[26px] grid place-items-center">
            <svg width="15" height="15"><circle cx="7.500" cy="7.500" r="6.500" fill="#f3f3f6" stroke="#85868f"/><path d="M4 7.500h7M7.500 4v7" stroke="#666770" stroke-width="1.600"/></svg>
        </button>
        <i class="w-px h-5 ml-0.5 bg-[#b0b0ba]"></i>
        <span class="flex items-center gap-1.5 w-[54px] pl-3">
            <svg width="14" height="8"><path d="M0 4h14" stroke="#000" stroke-width="1.500"/><path d="M6 0.500v7L11 4z"/></svg>
            11
        </span>
        <i class="w-px h-5 bg-[#b0b0ba]"></i>
        <span class="flex items-center gap-[7px] w-[54px] pl-3.5">
            <svg width="11" height="11"><path d="M.75.750h9.500v9.500H.75z" fill="#0ff" stroke="#000" stroke-width="1.500"/></svg>
            12
        </span>
        <i class="w-px h-5 bg-[#b0b0ba]"></i>
    </footer>
</body>
</html>
